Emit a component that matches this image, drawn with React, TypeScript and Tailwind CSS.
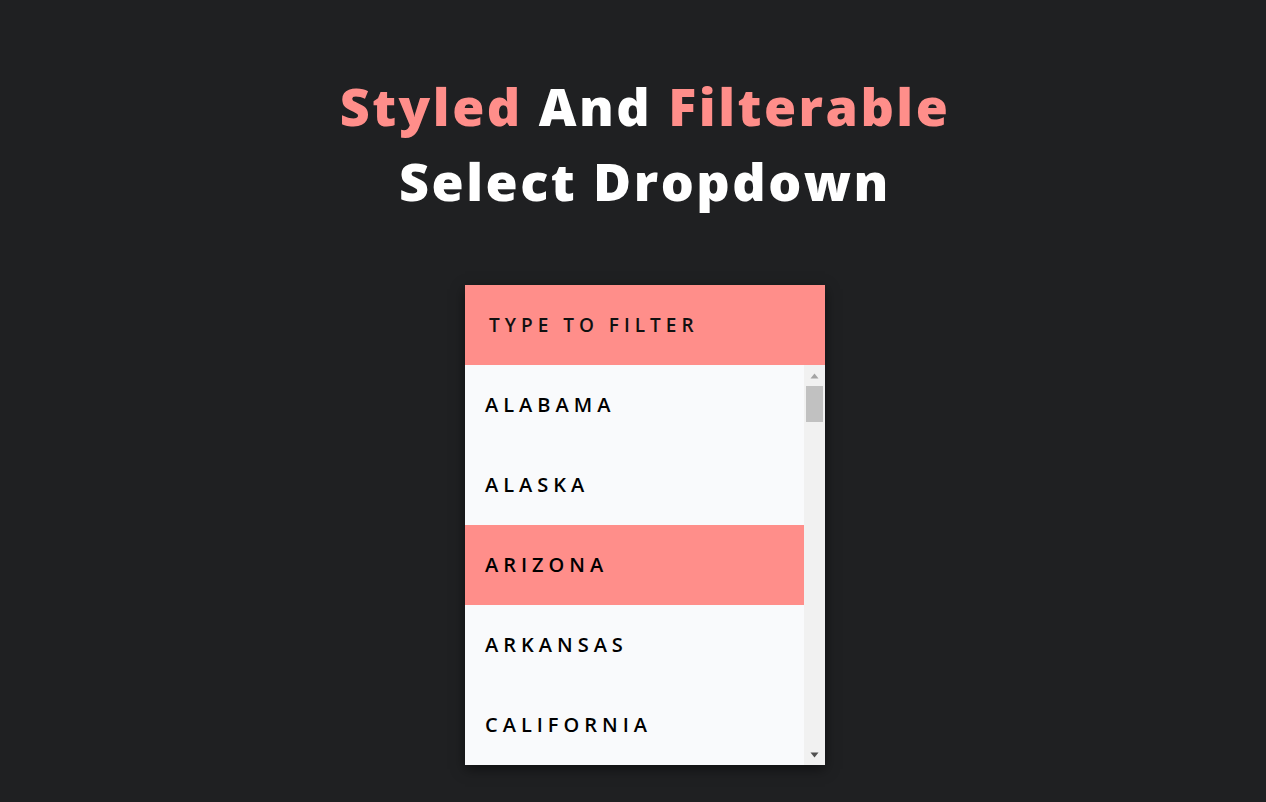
import React from 'react';

const states = ['Alabama', 'Alaska', 'Arizona', 'Arkansas', 'California'];

const coral = 'bg-[#ff8e8a]';

function Scrollbar(): React.ReactElement {
  return (
    <div className="w-[21px] bg-[#f1f1f1] flex flex-col items-center">
      <div className="h-[21px] w-full flex items-center justify-center">
        <svg width="9" height="6" viewBox="0 0 9 6">
          <polygon points="4.5,0.5 8.5,5.5 0.5,5.5" fill="#a3a3a3" />
        </svg>
      </div>
      <div className="w-[17px] h-[36px] bg-[#c1c1c1]" />
      <div className="flex-1" />
      <div className="h-[21px] w-full flex items-center justify-center">
        <svg width="9" height="6" viewBox="0 0 9 6">
          <polygon points="0.5,0.5 8.5,0.5 4.5,5.5" fill="#505050" />
        </svg>
      </div>
    </div>
  );
}

export default function App(): React.ReactElement {
  return (
    <div
      className="min-h-[802px] bg-[#1f2022] flex flex-col items-center pl-[24px]"
      style={{ fontFamily: '"Open Sans", "Noto Sans", sans-serif' }}
    >
      <h1 className="mt-[68px] text-center text-[52px] leading-[75px] font-extrabold tracking-[2.5px] text-white">
        <span className="text-[#ff8e8a]">Styled</span> And{' '}
        <span className="text-[#ff8e8a]">Filterable</span>
        <br />
        Select Dropdown
      </h1>

      <div className="mt-[67px] w-[360px] shadow-[0_4px_12px_rgba(0,0,0,0.5)]">
        <div className={`${coral} h-[80px] flex items-center pl-[24px]`}>
          <span className="text-[19px] font-semibold uppercase tracking-[5px] text-[#111]">
            Type to filter
          </span>
        </div>
        <div className="flex h-[400px] bg-[#f9fafc]">
          <ul className="flex-1 flex flex-col">
            {states.map((s) => (
              <li
                key={s}
                className={`h-[80px] flex items-center pl-[20px] text-[20px] font-semibold uppercase tracking-[5px] text-black ${
                  s === 'Arizona' ? coral : ''
                }`}
              >
                {s}
              </li>
            ))}
          </ul>
          <Scrollbar />
        </div>
      </div>
    </div>
  );
}
